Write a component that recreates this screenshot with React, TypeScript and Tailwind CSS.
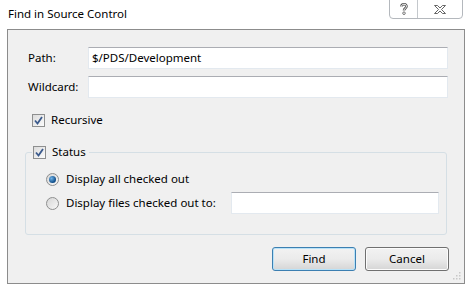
import React from "react";

const font = { fontFamily: '"Noto Sans", "Open Sans", sans-serif' };

function CheckBox() {
  return (
    <span className="w-[13px] h-[13px] border border-[#8e8f8f] bg-gradient-to-br from-[#dcdcdc] to-[#fbfbfb] flex items-center justify-center shrink-0">
      <svg width="9" height="9" viewBox="0 0 9 9">
        <path d="M1 4.5 L3.5 7.5 L8 1" fill="none" stroke="#3b5a8c" strokeWidth="1.8" />
      </svg>
    </span>
  );
}

function Radio({ checked }: { checked?: boolean }) {
  return (
    <span className="w-[13px] h-[13px] rounded-full border border-[#8e8f8f] bg-gradient-to-br from-[#d6d6d6] to-[#f8f8f8] flex items-center justify-center shrink-0">
      {checked && (
        <span className="w-[7px] h-[7px] rounded-full bg-[radial-gradient(circle_at_35%_35%,#6fb3e8,#0d4a86_70%)]" />
      )}
    </span>
  );
}

function TextBox({ w, value }: { w: string; value?: string }) {
  return (
    <div
      className={`${w} h-[22px] bg-white border border-[#e3e9ef] border-t-[#abadb3] flex items-center pl-[3px] text-black`}
    >
      {value}
    </div>
  );
}

export default function App() {
  return (
    <div className="w-[472px] h-[291px] bg-white overflow-hidden text-black text-[11.5px]" style={font}>
      <div className="h-[29px] flex items-start">
        <div className="pl-[8px] pt-[6px] leading-[16px]">Find in Source Control</div>
        <div className="ml-auto mr-[9px] mt-[-1px] w-[74px] h-[20px] border border-[#b4b8bd] rounded-b-[4px] flex bg-white">
          <div className="w-[28px] border-r border-[#c4c8cc] flex items-center justify-center">
            <svg width="8" height="12" viewBox="0 0 8 12">
              <path d="M1.5 3.5 C1.5 0.5 6.5 0.5 6.5 3.3 C6.5 5.3 4 5.3 4 7.5" fill="none" stroke="#555" strokeWidth="2.6" />
              <path d="M1.5 3.5 C1.5 0.5 6.5 0.5 6.5 3.3 C6.5 5.3 4 5.3 4 7.5" fill="none" stroke="#fff" strokeWidth="1" />
              <circle cx="4" cy="10.2" r="1.3" fill="#fff" stroke="#555" strokeWidth="0.8" />
            </svg>
          </div>
          <div className="flex-1 flex items-center justify-center">
            <svg width="12" height="9" viewBox="0 0 12 9">
              <polygon
                points="0.5,0.5 3.5,0.5 6,3 8.5,0.5 11.5,0.5 7.5,4.5 11.5,8.5 8.5,8.5 6,6 3.5,8.5 0.5,8.5 4.5,4.5"
                fill="#fff"
                stroke="#555"
                strokeWidth="0.9"
              />
            </svg>
          </div>
        </div>
      </div>

      <div className="relative ml-[7px] w-[458px] h-[255px] border border-[#8c8c8c] bg-[#f0f0f0] flex flex-col">
        <div className="mt-[17px] pl-[20px] flex items-center">
          <span className="w-[60px]">Path:</span>
          <TextBox w="w-[360px]" value="$/PDS/Development" />
        </div>
        <div className="mt-[7px] pl-[20px] flex items-center">
          <span className="w-[60px]">Wildcard:</span>
          <TextBox w="w-[360px]" />
        </div>
        <div className="mt-[14px] pl-[24px] h-[16px] flex items-center gap-[6px]">
          <CheckBox />
          <span>Recursive</span>
        </div>

        <fieldset className="mt-[16px] ml-[17px] w-[422px] border border-[#d5dfe5] rounded-[3px] pb-[20px]">
          <legend className="ml-[6px] px-[1px] h-[16px] flex items-center gap-[6px]">
            <CheckBox />
            <span className="pr-[2px]">Status</span>
          </legend>
          <div className="mt-[11px] pl-[20px] h-[16px] flex items-center gap-[7px]">
            <Radio checked />
            <span>Display all checked out</span>
          </div>
          <div className="mt-[5px] pl-[20px] pr-[7px] flex items-center gap-[7px]">
            <Radio />
            <span>Display files checked out to:</span>
            <div className="ml-auto">
              <TextBox w="w-[208px]" />
            </div>
          </div>
        </fieldset>

        <div className="mt-[12px] pr-[15px] flex justify-end gap-[9px]">
          <button className="w-[84px] h-[24px] rounded-[3px] border border-[#3c7fb1] bg-gradient-to-b from-[#f2f2f2] via-[#ebebeb] to-[#d5d5d5] shadow-[inset_0_0_0_1px_#b8e2f8]">
            Find
          </button>
          <button className="w-[84px] h-[24px] rounded-[3px] border border-[#707070] bg-gradient-to-b from-[#f2f2f2] via-[#ebebeb] to-[#d5d5d5] shadow-[inset_0_0_0_1px_#fcfcfc]">
            Cancel
          </button>
        </div>

        <svg width="8" height="8" viewBox="0 0 8 8" className="absolute right-[3px] bottom-[3px]">
          <rect x="6" y="0" width="1.5" height="1.5" fill="#c8c8c8" />
          <rect x="3" y="3" width="1.5" height="1.5" fill="#c8c8c8" />
          <rect x="6" y="3" width="1.5" height="1.5" fill="#c8c8c8" />
          <rect x="0" y="6" width="1.5" height="1.5" fill="#c8c8c8" />
          <rect x="3" y="6" width="1.5" height="1.5" fill="#c8c8c8" />
          <rect x="6" y="6" width="1.5" height="1.5" fill="#c8c8c8" />
        </svg>
      </div>
    </div>
  );
}
